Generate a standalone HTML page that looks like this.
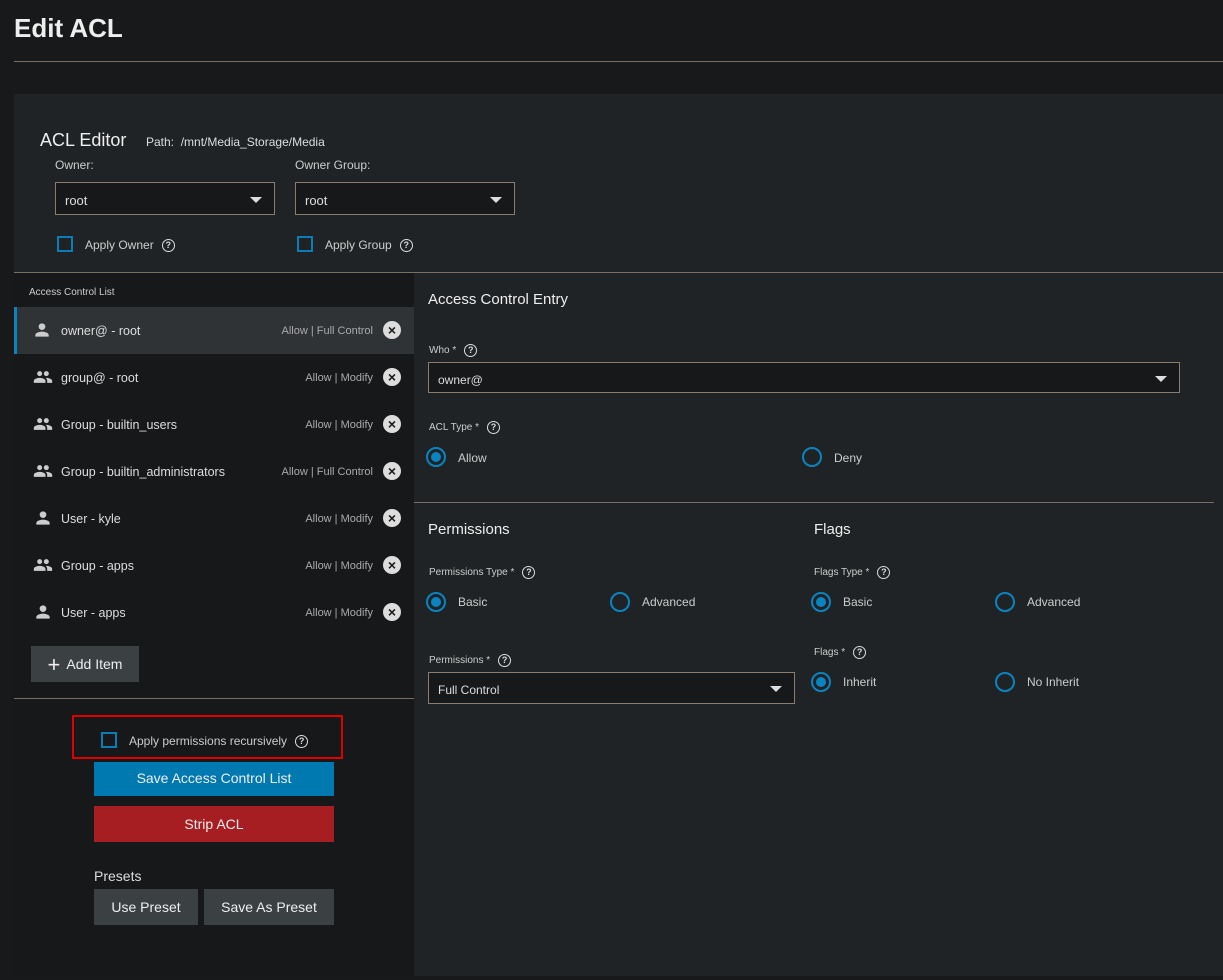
<!DOCTYPE html>
<html><head><meta charset="utf-8"><style>
*{box-sizing:border-box;margin:0;padding:0}
body{width:1223px;height:980px;background:#18191b;font-family:"Liberation Sans",sans-serif;color:#e6e6e6;position:relative;overflow:hidden}
.a{position:absolute;white-space:nowrap}
.card{left:14px;top:94px;width:1209px;height:882px;background:#202325}
.left{left:14px;top:273px;width:400px;height:703px;background:#17181a}
.hr{position:absolute;height:1px;background:#7a6e62}
.sel{border:1px solid #8a7d70;background:#17181a;height:33px}
.sel span{position:absolute;left:9px;top:10px;font-size:13px;color:#ddd}
.sel i{position:absolute;right:12px;top:14px;width:0;height:0;border-left:6px solid transparent;border-right:6px solid transparent;border-top:6px solid #ddd}
.cb{width:16px;height:16px;border:2px solid #0a7db8}
.lbl{font-size:12px;color:#ccc}
.sm{font-size:10px;color:#ccc}
.q{display:inline-block;width:13px;height:13px;border:1.5px solid #ddd;border-radius:50%;font-size:9px;line-height:10px;text-align:center;font-weight:bold;color:#ddd;vertical-align:middle;margin-left:8px}
.r{width:20px;height:20px;border:2px solid #0a84c0;border-radius:50%}
.r.on::after{content:"";position:absolute;left:3px;top:3px;width:10px;height:10px;border-radius:50%;background:#0a84c0}
.row{left:14px;width:400px;height:47px}
.row .n{position:absolute;left:47px;top:17px;font-size:12.5px;color:#ddd}
.row .t{position:absolute;right:41px;top:18px;font-size:11px;color:#aaa}
.row .x{position:absolute;right:13px;top:14px;width:18px;height:18px;border-radius:50%;background:#ddd;color:#17181a;font-size:14px;line-height:18px;text-align:center;font-weight:bold}
.row svg{position:absolute;left:19px;top:13px}
.btn{font-size:14px;color:#eee;text-align:center}
</style></head><body>
<div class="a" style="left:14px;top:13px;font-size:26px;font-weight:bold;color:#eee">Edit ACL</div>
<div class="hr" style="left:14px;top:61px;width:1209px"></div>
<div class="a card"></div>
<div class="a" style="left:40px;top:130px;font-size:18px;color:#eee">ACL Editor</div>
<div class="a" style="left:146px;top:135px;font-size:12px;color:#ddd">Path:&nbsp; /mnt/Media_Storage/Media</div>
<div class="a lbl" style="left:55px;top:158px">Owner:</div>
<div class="a lbl" style="left:295px;top:158px">Owner Group:</div>
<div class="a sel" style="left:55px;top:182px;width:220px"><span>root</span><i></i></div>
<div class="a sel" style="left:295px;top:182px;width:220px"><span>root</span><i></i></div>
<div class="a cb" style="left:57px;top:236px"></div>
<div class="a lbl" style="left:85px;top:238px">Apply Owner<span class="q">?</span></div>
<div class="a cb" style="left:297px;top:236px"></div>
<div class="a lbl" style="left:325px;top:238px">Apply Group<span class="q">?</span></div>
<div class="hr" style="left:14px;top:272px;width:1209px"></div>
<div class="a left"></div>
<div class="a" style="left:29px;top:287px;font-size:10px;color:#ccc">Access Control List</div>

<div class="a row" style="top:307px;background:#303336;border-left:3px solid #0a84c0"><svg width="20" height="20" viewBox="0 0 24 24" style="left:15px"><path fill="#ccc" d="M12 12a4 4 0 1 0 0-8 4 4 0 0 0 0 8zm0 2c-2.7 0-8 1.3-8 4v2h16v-2c0-2.7-5.3-4-8-4z"/></svg><span class="n" style="left:44px">owner@ - root</span><span class="t">Allow | Full Control</span><span class="x">×</span></div>
<div class="a row" style="top:354px"><svg width="20" height="20" viewBox="0 0 24 24"><path fill="#ccc" d="M16 11a3 3 0 1 0 0-6 3 3 0 0 0 0 6zm-8 0a3 3 0 1 0 0-6 3 3 0 0 0 0 6zm0 2c-2.3 0-7 1.2-7 3.5V19h14v-2.5C15 14.2 10.3 13 8 13zm8 0c-.3 0-.6 0-1 .1 1.2.8 2 1.9 2 3.4V19h6v-2.5c0-2.3-4.7-3.5-7-3.5z"/></svg><span class="n">group@ - root</span><span class="t">Allow | Modify</span><span class="x">×</span></div>
<div class="a row" style="top:401px"><svg width="20" height="20" viewBox="0 0 24 24"><path fill="#ccc" d="M16 11a3 3 0 1 0 0-6 3 3 0 0 0 0 6zm-8 0a3 3 0 1 0 0-6 3 3 0 0 0 0 6zm0 2c-2.3 0-7 1.2-7 3.5V19h14v-2.5C15 14.2 10.3 13 8 13zm8 0c-.3 0-.6 0-1 .1 1.2.8 2 1.9 2 3.4V19h6v-2.5c0-2.3-4.7-3.5-7-3.5z"/></svg><span class="n">Group - builtin_users</span><span class="t">Allow | Modify</span><span class="x">×</span></div>
<div class="a row" style="top:448px"><svg width="20" height="20" viewBox="0 0 24 24"><path fill="#ccc" d="M16 11a3 3 0 1 0 0-6 3 3 0 0 0 0 6zm-8 0a3 3 0 1 0 0-6 3 3 0 0 0 0 6zm0 2c-2.3 0-7 1.2-7 3.5V19h14v-2.5C15 14.2 10.3 13 8 13zm8 0c-.3 0-.6 0-1 .1 1.2.8 2 1.9 2 3.4V19h6v-2.5c0-2.3-4.7-3.5-7-3.5z"/></svg><span class="n">Group - builtin_administrators</span><span class="t">Allow | Full Control</span><span class="x">×</span></div>
<div class="a row" style="top:495px"><svg width="20" height="20" viewBox="0 0 24 24"><path fill="#ccc" d="M12 12a4 4 0 1 0 0-8 4 4 0 0 0 0 8zm0 2c-2.7 0-8 1.3-8 4v2h16v-2c0-2.7-5.3-4-8-4z"/></svg><span class="n">User - kyle</span><span class="t">Allow | Modify</span><span class="x">×</span></div>
<div class="a row" style="top:542px"><svg width="20" height="20" viewBox="0 0 24 24"><path fill="#ccc" d="M16 11a3 3 0 1 0 0-6 3 3 0 0 0 0 6zm-8 0a3 3 0 1 0 0-6 3 3 0 0 0 0 6zm0 2c-2.3 0-7 1.2-7 3.5V19h14v-2.5C15 14.2 10.3 13 8 13zm8 0c-.3 0-.6 0-1 .1 1.2.8 2 1.9 2 3.4V19h6v-2.5c0-2.3-4.7-3.5-7-3.5z"/></svg><span class="n">Group - apps</span><span class="t">Allow | Modify</span><span class="x">×</span></div>
<div class="a row" style="top:589px"><svg width="20" height="20" viewBox="0 0 24 24"><path fill="#ccc" d="M12 12a4 4 0 1 0 0-8 4 4 0 0 0 0 8zm0 2c-2.7 0-8 1.3-8 4v2h16v-2c0-2.7-5.3-4-8-4z"/></svg><span class="n">User - apps</span><span class="t">Allow | Modify</span><span class="x">×</span></div>

<div class="a btn" style="left:31px;top:646px;width:108px;height:36px;background:#3b4043;line-height:36px"><span style="font-size:22px;vertical-align:-3px;margin-right:6px">+</span>Add Item</div>
<div class="hr" style="left:14px;top:698px;width:400px"></div>
<div class="a" style="left:72px;top:715px;width:271px;height:44px;border:2px solid #e00000"></div>
<div class="a cb" style="left:101px;top:732px"></div>
<div class="a lbl" style="left:129px;top:734px">Apply permissions recursively<span class="q">?</span></div>
<div class="a btn" style="left:94px;top:762px;width:240px;height:34px;background:#0079b0;line-height:32px">Save Access Control List</div>
<div class="a btn" style="left:94px;top:806px;width:240px;height:36px;background:#a61e22;line-height:36px">Strip ACL</div>
<div class="a" style="left:94px;top:868px;font-size:14px;color:#ddd">Presets</div>
<div class="a btn" style="left:94px;top:889px;width:104px;height:36px;background:#3b4043;line-height:36px">Use Preset</div>
<div class="a btn" style="left:204px;top:889px;width:130px;height:36px;background:#3b4043;line-height:36px">Save As Preset</div>

<div class="a" style="left:428px;top:291px;font-size:15px;color:#eee">Access Control Entry</div>
<div class="a sm" style="left:429px;top:344px">Who *<span class="q">?</span></div>
<div class="a sel" style="left:428px;top:362px;width:752px;height:31px"><span style="font-size:12px;top:10px">owner@</span><i style="top:13px"></i></div>
<div class="a sm" style="left:429px;top:421px">ACL Type *<span class="q">?</span></div>
<div class="a r on" style="left:426px;top:447px"></div><div class="a lbl" style="left:458px;top:451px">Allow</div>
<div class="a r" style="left:802px;top:447px"></div><div class="a lbl" style="left:834px;top:451px">Deny</div>
<div class="hr" style="left:414px;top:502px;width:800px"></div>
<div class="a" style="left:428px;top:521px;font-size:15px;color:#eee">Permissions</div>
<div class="a" style="left:814px;top:521px;font-size:15px;color:#eee">Flags</div>
<div class="a sm" style="left:429px;top:566px">Permissions Type *<span class="q">?</span></div>
<div class="a sm" style="left:814px;top:566px">Flags Type *<span class="q">?</span></div>
<div class="a r on" style="left:426px;top:592px"></div><div class="a lbl" style="left:458px;top:595px">Basic</div>
<div class="a r" style="left:610px;top:592px"></div><div class="a lbl" style="left:642px;top:595px">Advanced</div>
<div class="a r on" style="left:811px;top:592px"></div><div class="a lbl" style="left:843px;top:595px">Basic</div>
<div class="a r" style="left:995px;top:592px"></div><div class="a lbl" style="left:1027px;top:595px">Advanced</div>
<div class="a sm" style="left:429px;top:654px">Permissions *<span class="q">?</span></div>
<div class="a sm" style="left:814px;top:646px">Flags *<span class="q">?</span></div>
<div class="a sel" style="left:428px;top:672px;width:367px;height:32px"><span style="font-size:12px;top:10px">Full Control</span><i style="top:13px"></i></div>
<div class="a r on" style="left:811px;top:672px"></div><div class="a lbl" style="left:843px;top:675px">Inherit</div>
<div class="a r" style="left:995px;top:672px"></div><div class="a lbl" style="left:1027px;top:675px">No Inherit</div>
</body></html>
